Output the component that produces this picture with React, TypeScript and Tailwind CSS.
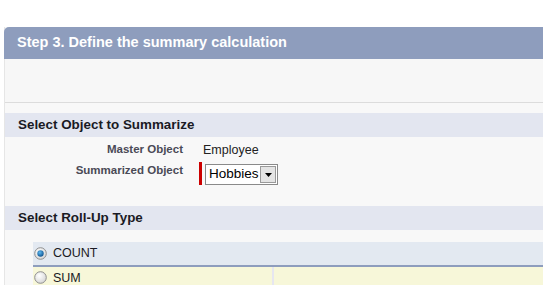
import React from "react";

function Radio({ checked }: { checked?: boolean }) {
  return (
    <svg width="13" height="13" viewBox="0 0 13 13" className="shrink-0">
      <defs>
        <radialGradient id={checked ? "rg1" : "rg0"} cx="40%" cy="35%" r="70%">
          <stop offset="0%" stopColor="#ffffff" />
          <stop offset="100%" stopColor="#d4d4d4" />
        </radialGradient>
        <radialGradient id="dot" cx="40%" cy="35%" r="70%">
          <stop offset="0%" stopColor="#5db8f0" />
          <stop offset="100%" stopColor="#0b4f8c" />
        </radialGradient>
      </defs>
      <circle cx="6.5" cy="6.5" r="5.8" fill={`url(#${checked ? "rg1" : "rg0"})`} stroke="#8f8f8f" strokeWidth="1" />
      {checked && <circle cx="6.5" cy="6.5" r="3.2" fill="url(#dot)" />}
    </svg>
  );
}

export default function App() {
  return (
    <div className="w-[543px] h-[285px] overflow-hidden bg-white" style={{ fontFamily: '"Liberation Sans", Arial, sans-serif' }}>
      <div className="pt-[27px] pl-[4px]">
        <div className="bg-[#f8f8f8] border-l border-[#e6e6e6]">
          <div className="h-[32px] bg-[#8e9dbd] rounded-tl-[5px] flex items-center pl-[13px] -ml-px">
            <span className="text-white font-bold text-[14.5px]">Step 3. Define the summary calculation</span>
          </div>
          <div className="h-[44px] bg-[#f7f7f7] border-b border-[#dcdcdc]"></div>
          <div className="h-[10px]"></div>
          <div className="h-[24px] bg-[#e3e6f0] flex items-center pl-[13px]">
            <span className="font-bold text-[13.4px] text-[#1a1a24]">Select Object to Summarize</span>
          </div>
          <div className="h-[69px] pt-[5px]">
            <div className="flex items-center h-[16px]">
              <div className="w-[178px] text-right font-bold text-[11.5px] text-[#4a4a56]">Master Object</div>
              <div className="pl-[20px] text-[12.5px] text-[#222]">Employee</div>
            </div>
            <div className="flex items-start mt-[4px]">
              <div className="w-[178px] text-right font-bold text-[11.5px] text-[#4a4a56]">Summarized Object</div>
              <div className="ml-[16px] flex items-start">
                <div className="w-[3px] h-[23px] bg-[#c00]"></div>
                <div className="ml-[3px] mt-[2px] h-[21px] w-[73px] border border-[#8a8a8a] bg-white flex items-center justify-between">
                  <span className="text-[13.5px] text-black pl-[3px]">Hobbies</span>
                  <div className="w-[16px] h-[17px] mr-[1px] bg-[#e4e4e4] border border-[#9a9a9a] flex items-center justify-center">
                    <svg width="7" height="4" viewBox="0 0 7 4"><path d="M0 0h7L3.5 4z" fill="#000" /></svg>
                  </div>
                </div>
              </div>
            </div>
          </div>
          <div className="h-[24px] bg-[#e3e6f0] flex items-center pl-[13px]">
            <span className="font-bold text-[13.4px] text-[#1a1a24]">Select Roll-Up Type</span>
          </div>
          <div className="h-[12px]"></div>
          <div className="ml-[28px]">
            <div className="h-[25px] bg-[#e3e9f1] border-b-[2px] border-[#8e9dbd] flex items-center pl-[1px]">
              <Radio checked />
              <span className="ml-[6px] text-[12.5px] text-[#1a1a24]">COUNT</span>
            </div>
            <div className="h-[30px] bg-[#f7f7d9] flex">
              <div className="w-[241px] flex items-start pt-[4px] pl-[1px] border-r-2 border-[#e6e6f0]">
                <Radio />
                <span className="ml-[6px] text-[12.5px] leading-[14px] text-[#1a1a24]">SUM</span>
              </div>
              <div className="flex-1"></div>
            </div>
          </div>
        </div>
      </div>
    </div>
  );
}
